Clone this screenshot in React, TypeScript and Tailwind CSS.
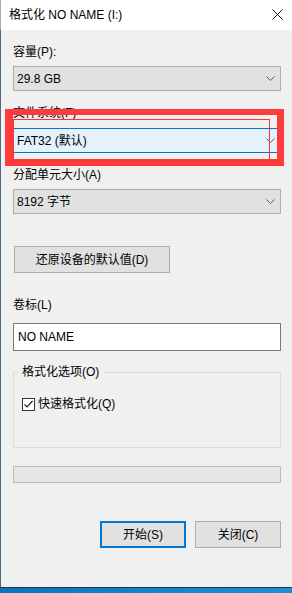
import React from 'react';

const Chevron = () => (
  <svg width="9" height="5" viewBox="0 0 9 5" className="shrink-0">
    <path d="M0.5 0.5 L4.5 4.5 L8.5 0.5" fill="none" stroke="#5a5a5a" strokeWidth="1" />
  </svg>
);

const Combo = ({ value, active }: { value: string; active?: boolean }) => (
  <div
    className={
      active
        ? 'h-[25px] flex items-center justify-between pl-[3px] pr-[5px] border border-[#0078d7] bg-[#e5f1fb]'
        : 'h-[25px] flex items-center justify-between pl-[3px] pr-[5px] border border-[#adadad] bg-[#e1e1e1]'
    }
  >
    <span>{value}</span>
    <Chevron />
  </div>
);

export default function App() {
  return (
    <div className="relative w-[292px] h-[593px] flex flex-col overflow-hidden bg-[#f0f0f0] text-[12px] leading-[16px] text-black font-['Liberation_Sans','Noto_Sans_CJK_SC',sans-serif]">
      {/* Title bar */}
      <div className="h-[30px] shrink-0 flex items-center pl-[8px] pr-[9px] bg-white border-l border-[#a8a8a8]">
        <span>格式化 NO NAME (I:)</span>
        <svg width="11" height="11" viewBox="0 0 11 11" className="ml-auto mt-[-1px]">
          <path d="M0.5 0.5 L10.5 10.5 M10.5 0.5 L0.5 10.5" stroke="#111" strokeWidth="1" />
        </svg>
      </div>

      {/* Body */}
      <div className="flex-1 flex flex-col pl-[12px] pr-[11px] border-l border-[#4a6f84]">
        <div className="mt-[14px]">容量(P):</div>
        <div className="mt-[6px]">
          <Combo value="29.8 GB" />
        </div>

        <div className="mt-[14px]">文件系统(F)</div>
        <div className="mt-[7px]">
          <Combo value="FAT32 (默认)" active />
        </div>

        <div className="mt-[14px]">分配单元大小(A)</div>
        <div className="mt-[6px]">
          <Combo value="8192 字节" />
        </div>

        <button className="mt-[32px] ml-[1px] w-[156px] h-[27px] border border-[#adadad] bg-[#e1e1e1] flex items-center justify-center">
          还原设备的默认值(D)
        </button>

        <div className="mt-[24px]">卷标(L)</div>
        <div className="mt-[10px] h-[28px] flex items-center pl-[4px] border border-[#7a7a7a] bg-white">
          NO NAME
        </div>

        {/* Group box */}
        <div className="relative mt-[21px] h-[76px] border border-[#dcdcdc] pt-[23px] pl-[8px]">
          <span className="absolute -top-[9px] left-[4px] px-[4px] bg-[#f0f0f0]">格式化选项(O)</span>
          <div className="flex items-center gap-[3px]">
            <div className="w-[13px] h-[13px] border border-[#333] bg-white flex items-center justify-center">
              <svg width="11" height="11" viewBox="0 0 11 11">
                <path d="M1.5 5.5 L4 8 L9.5 2" fill="none" stroke="#222" strokeWidth="1.2" />
              </svg>
            </div>
            <span>快速格式化(Q)</span>
          </div>
        </div>

        {/* Progress */}
        <div className="mt-[18px] h-[17px] border border-[#bcbcbc] bg-[#e6e6e6]" />

        {/* Buttons */}
        <div className="mt-[38px] flex justify-end gap-[9px]">
          <button className="w-[86px] h-[27px] border-2 border-[#0078d7] bg-[#e1e1e1] flex items-center justify-center">
            开始(S)
          </button>
          <button className="w-[86px] h-[27px] border border-[#adadad] bg-[#e1e1e1] flex items-center justify-center">
            关闭(C)
          </button>
        </div>
      </div>

      <div className="h-[1px] shrink-0 bg-[#1d3a4c]" />
      <div className="h-[5px] shrink-0 bg-gradient-to-r from-[#0a74bb] to-[#1b91d8]" />

      {/* Annotation overlay */}
      <div className="absolute left-[13px] top-[119px] w-[257px] h-[41px] border border-[#f03a3a]" />
      <div className="absolute left-[5px] top-[109px] w-[279px] h-[57px] border-t-[6px] border-l-[8px] border-r-[7px] border-b-[7px] border-[#fd3b3b]" />
    </div>
  );
}
